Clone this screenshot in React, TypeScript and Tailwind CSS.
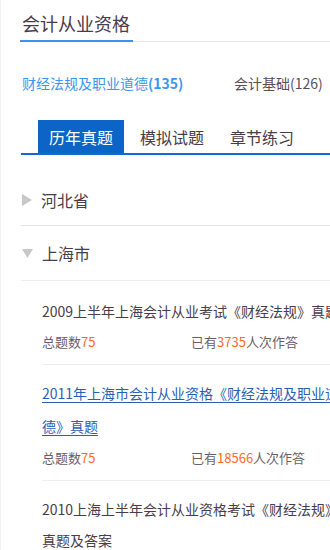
import React from "react";

const font = { fontFamily: '"Noto Sans CJK SC", "Noto Sans", sans-serif' };

const Stats = ({ total, done }: { total: number; done: number }) => (
  <div className="flex items-center text-[13px] text-[#6b5e6b] h-[22px]">
    <span className="w-[149px]">
      总题数<span className="text-[#ff6a26]">{total}</span>
    </span>
    <span>
      已有<span className="text-[#ff6a26]">{done}</span>人次作答
    </span>
  </div>
);

export default function App() {
  return (
    <div className="w-[330px] h-[550px] overflow-hidden bg-white border-l border-[#f2f2f2] text-[#4a3c4a]" style={font}>
      {/* HEADER */}
      <div className="pt-[10px] pl-[19px]">
        <div className="flex items-end">
          <div className="w-[113px] border-b-2 border-[#3d93ec] pl-[2px] pb-[4px] text-[18px] leading-[26px] whitespace-nowrap">
            会计从业资格
          </div>
          <div className="flex-1 border-b border-[#e8e8e8]" />
        </div>
      </div>

      {/* CATEGORIES */}
      <div className="flex items-center pl-[21px] mt-[30px] text-[14px] leading-[22px] whitespace-nowrap">
        <span className="text-[#3d97ee] w-[212px]">
          财经法规及职业道德<span className="font-bold">(135)</span>
        </span>
        <span className="text-[#5a4d5a]">会计基础(126)</span>
      </div>

      {/* TABS */}
      <div className="ml-[20px] mt-[26px] flex border-b-2 border-[#1369cc] text-[16px] whitespace-nowrap">
        <div className="ml-[17px] w-[86px] h-[33px] bg-[#0b64c6] text-white flex items-center justify-center">历年真题</div>
        <div className="ml-[16px] w-[62px] h-[33px] flex items-center">模拟试题</div>
        <div className="ml-[28px] h-[33px] flex items-center">章节练习</div>
      </div>

      {/* PROVINCES */}
      <div className="ml-[20px] mt-[19px]">
        <div className="flex items-center h-[52px] border-b border-[#e6e4e6]">
          <svg width="10" height="12" viewBox="0 0 10 12" className="ml-[1px]">
            <path d="M0 0 L10 6 L0 12 Z" fill="#c9c7c9" />
          </svg>
          <span className="ml-[9px] text-[16px]">河北省</span>
        </div>
        <div className="flex items-center h-[55px] border-b border-[#eeeeee]">
          <svg width="11" height="9" viewBox="0 0 11 9" className="ml-[1px]">
            <path d="M0 0 L11 0 L5.5 9 Z" fill="#c9c7c9" />
          </svg>
          <span className="ml-[9px] text-[16px]">上海市</span>
        </div>
      </div>

      {/* EXAM LIST */}
      <div className="ml-[41px] text-[14px]">
        <div className="pt-[17px] pb-[11px] border-b border-[#eeeeee]">
          <div className="whitespace-nowrap leading-[26px] h-[26px]">2009上半年上海会计从业考试《财经法规》真题</div>
          <div className="mt-[7px]">
            <Stats total={75} done={3735} />
          </div>
        </div>
        <div className="pt-[12px] pb-[11px] border-b border-[#eeeeee]">
          <div className="whitespace-nowrap leading-[33px] text-[#2b5fb3] underline underline-offset-[3px]">
            2011年上海市会计从业资格《财经法规及职业道
            <br />
            德》真题
          </div>
          <div className="mt-[4px]">
            <Stats total={75} done={18566} />
          </div>
        </div>
        <div className="pt-[13px] whitespace-nowrap leading-[31px]">
          2010上海上半年会计从业资格考试《财经法规》
          <br />
          真题及答案
        </div>
      </div>
    </div>
  );
}
